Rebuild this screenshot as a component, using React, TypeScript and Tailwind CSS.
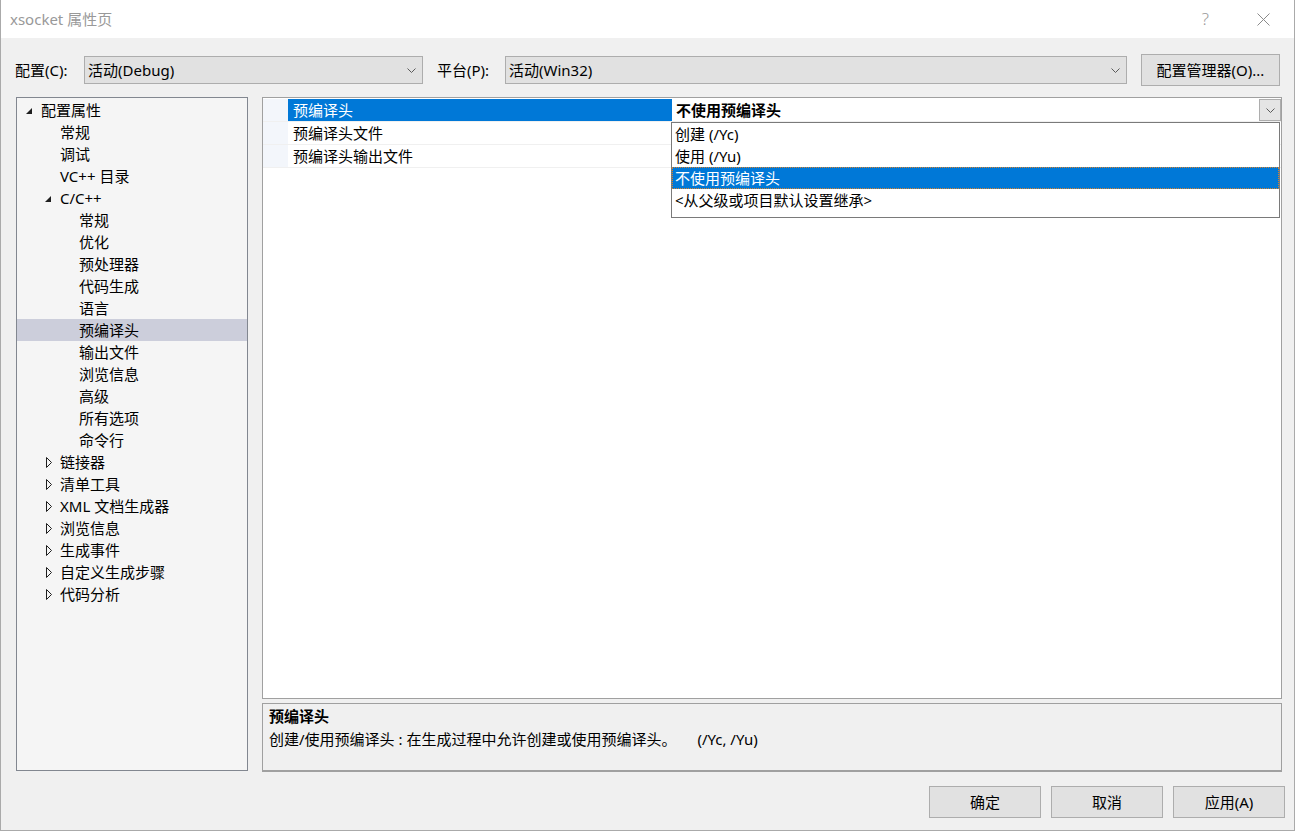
import React from 'react';

type TreeNode = { label: string; level: number; toggle?: 'open' | 'closed'; selected?: boolean };

const TREE: TreeNode[] = [
  { label: '配置属性', level: 0, toggle: 'open' },
  { label: '常规', level: 1 },
  { label: '调试', level: 1 },
  { label: 'VC++ 目录', level: 1 },
  { label: 'C/C++', level: 1, toggle: 'open' },
  { label: '常规', level: 2 },
  { label: '优化', level: 2 },
  { label: '预处理器', level: 2 },
  { label: '代码生成', level: 2 },
  { label: '语言', level: 2 },
  { label: '预编译头', level: 2, selected: true },
  { label: '输出文件', level: 2 },
  { label: '浏览信息', level: 2 },
  { label: '高级', level: 2 },
  { label: '所有选项', level: 2 },
  { label: '命令行', level: 2 },
  { label: '链接器', level: 1, toggle: 'closed' },
  { label: '清单工具', level: 1, toggle: 'closed' },
  { label: 'XML 文档生成器', level: 1, toggle: 'closed' },
  { label: '浏览信息', level: 1, toggle: 'closed' },
  { label: '生成事件', level: 1, toggle: 'closed' },
  { label: '自定义生成步骤', level: 1, toggle: 'closed' },
  { label: '代码分析', level: 1, toggle: 'closed' },
];

const INDENT = ['pl-[8px]', 'pl-[27px]', 'pl-[46px]'];

const PROPS = ['预编译头', '预编译头文件', '预编译头输出文件'];

const OPTIONS = ['创建 (/Yc)', '使用 (/Yu)', '不使用预编译头', '<从父级或项目默认设置继承>'];

function Chevron({ w = 9, h = 5 }: { w?: number; h?: number }) {
  return (
    <svg width={w} height={h} viewBox={`0 0 ${w} ${h}`}>
      <polyline points={`0.5,0.5 ${w / 2},${h - 0.5} ${w - 0.5},0.5`} fill="none" stroke="#5a5a5a" strokeWidth="1" />
    </svg>
  );
}

function Select({ value, width }: { value: string; width: string }) {
  return (
    <div className={`${width} h-[28px] flex items-center justify-between pl-[3px] pr-[6px] bg-[#e1e1e1] border border-[#adadad]`}>
      <span className="leading-[22px]">{value}</span>
      <Chevron />
    </div>
  );
}

function Button({ children, width }: { children: React.ReactNode; width: string }) {
  return (
    <button className={`${width} h-[32px] flex items-center justify-center bg-[#e1e1e1] border border-[#adadad] leading-[22px]`}>
      {children}
    </button>
  );
}

function Toggle({ kind }: { kind?: 'open' | 'closed' }) {
  return (
    <div className="w-[16px] h-full flex items-center">
      {kind === 'open' && (
        <svg width="8" height="7" viewBox="0 0 8 7" className="mt-[2px]">
          <polygon points="7,0 7,6 1,6" fill="#1e1e1e" />
        </svg>
      )}
      {kind === 'closed' && (
        <svg width="8" height="11" viewBox="0 0 8 11" className="ml-[2px]">
          <polygon points="0.5,0.5 5.5,5.5 0.5,10.5" fill="none" stroke="#1e1e1e" strokeWidth="1" />
        </svg>
      )}
    </div>
  );
}

export default function App() {
  return (
    <div className="w-[1295px] h-[831px] flex flex-col bg-[#f0f0f0] border-l border-r border-b border-[#aaaaaa] text-[15px] text-black font-['Noto_Sans','Noto_Sans_CJK_SC',sans-serif] overflow-hidden">
      {/* Title bar */}
      <div className="h-[38px] shrink-0 bg-white flex items-center pl-[9px]">
        <span className="text-[#999999] leading-[22px]">xsocket 属性页</span>
        <span className="ml-auto text-[#999999] text-[17px] font-light leading-[22px]">?</span>
        <svg width="13" height="13" viewBox="0 0 13 13" className="ml-[48px] mr-[24px]">
          <line x1="0.5" y1="0.5" x2="12.5" y2="12.5" stroke="#8a8a8a" strokeWidth="1" />
          <line x1="12.5" y1="0.5" x2="0.5" y2="12.5" stroke="#8a8a8a" strokeWidth="1" />
        </svg>
      </div>

      {/* Configuration row */}
      <div className="mt-[16px] h-[32px] flex items-center pl-[14px]">
        <span className="w-[69px] leading-[22px]">配置(C):</span>
        <Select value="活动(Debug)" width="w-[339px]" />
        <span className="ml-[14px] w-[68px] leading-[22px]">平台(P):</span>
        <Select value="活动(Win32)" width="w-[622px]" />
        <div className="ml-[14px]">
          <Button width="w-[139px]">配置管理器(O)...</Button>
        </div>
      </div>

      {/* Main area */}
      <div className="mt-[11px] h-[675px] flex pl-[15px]">
        {/* Tree */}
        <div className="w-[232px] h-[674px] bg-[#f5f5f5] border border-[#828790] pt-[1px]">
          {TREE.map((n, i) => (
            <div key={i} className={`flex h-[22px] items-center ${INDENT[n.level]} ${n.selected ? 'bg-[#cccedb]' : ''}`}>
              <Toggle kind={n.toggle} />
              <span className="leading-[22px] whitespace-nowrap">{n.label}</span>
            </div>
          ))}
        </div>

        {/* Right column */}
        <div className="ml-[14px] w-[1020px] flex flex-col">
          <div className="h-[603px] bg-white border border-[#a0a0a0] relative pt-[1px]">
            {PROPS.map((p, i) => (
              <div key={p} className="flex h-[23px] border-b border-[#f0f0f0]">
                <div className="w-[25px] bg-[#f3f6fb]" />
                <div className={`w-[384px] h-[22px] pl-[5px] leading-[22px] ${i === 0 ? 'bg-[#0078d7] text-white' : ''}`}>{p}</div>
                <div className="flex-1 h-[22px] flex items-start">
                  {i === 0 && (
                    <>
                      <span className="flex-1 pl-[4px] font-bold leading-[22px]">不使用预编译头</span>
                      <div className="w-[22px] h-[22px] flex items-center justify-center bg-[#e5e5e5] border border-[#adadad]">
                        <Chevron w={9} h={5} />
                      </div>
                    </>
                  )}
                </div>
              </div>
            ))}

            {/* Open dropdown list */}
            <div className="absolute left-[408px] top-[24px] w-[609px] h-[96px] bg-white border border-[#7a7a7a]">
              {OPTIONS.map((o, i) => (
                <div
                  key={o}
                  className={`h-[22px] pl-[2px] leading-[20px] border ${i === 2 ? 'bg-[#0078d7] text-white border-dotted border-[#d9822b]' : 'border-transparent'}`}
                >
                  {o}
                </div>
              ))}
            </div>
          </div>

          {/* Description */}
          <div className="mt-[4px] h-[69px] bg-[#f0f0f0] border border-[#a0a0a0] border-b-2 pl-[6px] pt-[1px]">
            <div className="font-bold leading-[22px]">预编译头</div>
            <div className="leading-[22px] mt-[1px] whitespace-nowrap">
              创建/使用预编译头 : 在生成过程中允许创建或使用预编译头。
              <span className="ml-[21px]">(/Yc, /Yu)</span>
            </div>
          </div>
        </div>
      </div>

      {/* Bottom buttons */}
      <div className="mt-[14px] flex justify-end pr-[9px] gap-[10px]">
        <Button width="w-[112px]">确定</Button>
        <Button width="w-[112px]">取消</Button>
        <Button width="w-[112px]">应用(A)</Button>
      </div>
    </div>
  );
}
